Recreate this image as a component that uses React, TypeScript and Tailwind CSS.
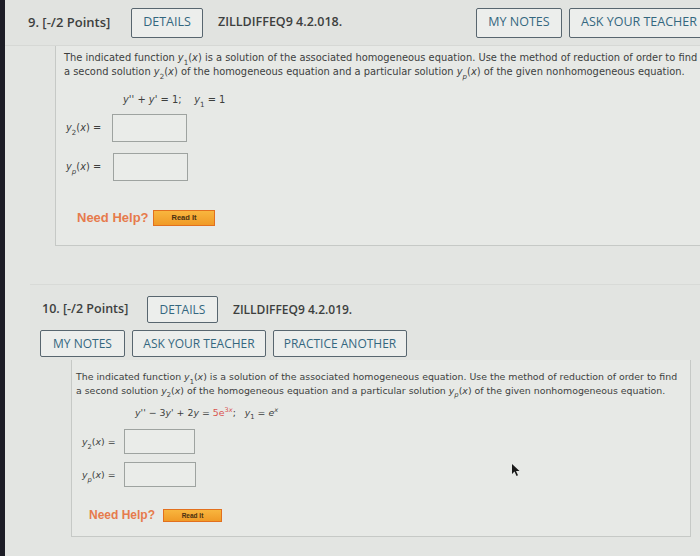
import React from "react";

const btn =
  "h-full border-[1.5px] border-[#58666f] rounded-[2px] bg-[#eceeec] text-[#34677f] font-['Open_Sans',sans-serif] flex items-center justify-center shrink-0 whitespace-nowrap";

function Y({ sub }: { sub: string }) {
  return (
    <span>
      <i>y</i>
      <sub className="text-[0.72em] leading-none align-[-0.3em]">{sub === "p" ? <i>p</i> : sub}</sub>
    </span>
  );
}

function Fn({ sub }: { sub: string }) {
  return (
    <span>
      <Y sub={sub} />(<i>x</i>)
    </span>
  );
}

function ReadIt({ w, h, text }: { w: string; h: string; text: string }) {
  return (
    <div
      className={`${w} ${h} border-[1.5px] border-[#e2701e] bg-gradient-to-b from-[#f8b63e] to-[#f09a26] flex items-center justify-center text-[#4a3010] font-bold font-['Liberation_Sans',sans-serif] ${text}`}
    >
      Read It
    </div>
  );
}

export default function App() {
  return (
    <div className="relative w-[700px] h-[556px] overflow-hidden bg-[#e3e5e2] flex text-[#3d3f3e]">
      <div className="w-[5px] shrink-0 bg-[#1d1d26]" />
      <div className="flex-1 flex flex-col min-w-0">
        {/* Question 9 header */}
        <div className="h-[46px] shrink-0 flex items-center pl-[23px] border-b border-[#d6d8d5] bg-[#e1e3e0] font-['Open_Sans',sans-serif]">
          <span className="w-[103px] shrink-0 text-[13px] font-semibold">9. [-/2 Points]</span>
          <div className="h-[30px] w-[72px] shrink-0">
            <div className={`${btn} text-[12.5px]`}>DETAILS</div>
          </div>
          <span className="ml-[15px] w-[258px] shrink-0 text-[12.5px] font-semibold">ZILLDIFFEQ9 4.2.018.</span>
          <div className="h-[30px] w-[86px] shrink-0">
            <div className={`${btn} text-[12.5px]`}>MY NOTES</div>
          </div>
          <div className="h-[30px] w-[140px] shrink-0 ml-[7px]">
            <div className={`${btn} text-[12.5px]`}>ASK YOUR TEACHER</div>
          </div>
        </div>

        {/* Question 9 body */}
        <div className="ml-[50px] h-[200px] shrink-0 border-l border-b border-[#c6c9c6] bg-[#e7e9e6] pl-[8px] pt-[5px] font-['DejaVu_Sans',sans-serif] text-[9.9px] leading-[14px] whitespace-nowrap">
          <div>
            The indicated function <Fn sub="1" /> is a solution of the associated homogeneous equation. Use the method of reduction of order to find
          </div>
          <div>
            a second solution <Fn sub="2" /> of the homogeneous equation and a particular solution <Fn sub="p" /> of the given nonhomogeneous equation.
          </div>
          <div className="ml-[59px] mt-[14px]">
            <i>y</i>'' + <i>y</i>' = 1;&nbsp;&nbsp;&nbsp; <Y sub="1" /> = 1
          </div>
          <div className="mt-[7px] flex flex-col gap-[11px]">
            <div className="flex items-center h-[28px]">
              <span className="ml-[2px] w-[46px] text-[9.8px]">
                <Fn sub="2" /> =
              </span>
              <div className="w-[75px] h-[28px] border border-[#9ea3a0] bg-[#eaece9]" />
            </div>
            <div className="flex items-center h-[28px]">
              <span className="ml-[2px] w-[47px] text-[9.8px]">
                <Fn sub="p" /> =
              </span>
              <div className="w-[75px] h-[28px] border border-[#9ea3a0] bg-[#eaece9]" />
            </div>
          </div>
          <div className="mt-[29px] ml-[13px] flex items-center h-[16px]">
            <span className="w-[76px] text-[13px] font-bold text-[#e67b4c] font-['Liberation_Sans',sans-serif]">Need Help?</span>
            <ReadIt w="w-[62px]" h="h-[16px]" text="text-[7.5px]" />
          </div>
        </div>

        {/* Question 10 header */}
        <div className="mt-[38px] ml-[25px] h-[76px] shrink-0 border-t border-[#d8dad7] bg-[#e2e4e1] pl-[10px] pt-[11px] font-['Open_Sans',sans-serif]">
          <div className="flex items-center h-[27px]">
            <span className="ml-[2px] w-[105px] shrink-0 text-[12.5px] font-semibold">10. [-/2 Points]</span>
            <div className="h-[27px] w-[71px] shrink-0">
              <div className={`${btn} text-[12px]`}>DETAILS</div>
            </div>
            <span className="ml-[15px] text-[12px] font-semibold">ZILLDIFFEQ9 4.2.019.</span>
          </div>
          <div className="mt-[7px] flex items-center gap-[7px] h-[27px]">
            <div className="h-[27px] w-[85px] shrink-0">
              <div className={`${btn} text-[12px]`}>MY NOTES</div>
            </div>
            <div className="h-[27px] w-[134px] shrink-0">
              <div className={`${btn} text-[12px]`}>ASK YOUR TEACHER</div>
            </div>
            <div className="h-[27px] w-[134px] shrink-0">
              <div className={`${btn} text-[12px]`}>PRACTICE ANOTHER</div>
            </div>
          </div>
        </div>

        {/* Question 10 body */}
        <div className="ml-[66px] w-[620px] h-[177px] shrink-0 border-l border-r border-b border-[#c6c9c6] bg-[#e7e9e6] pl-[4px] pt-[10px] font-['DejaVu_Sans',sans-serif] text-[9.4px] leading-[13px] whitespace-nowrap">
          <div>
            The indicated function <Fn sub="1" /> is a solution of the associated homogeneous equation. Use the method of reduction of order to find
          </div>
          <div>
            a second solution <Fn sub="2" /> of the homogeneous equation and a particular solution <Fn sub="p" /> of the given nonhomogeneous equation.
          </div>
          <div className="ml-[59px] mt-[8px]">
            <i>y</i>'' − 3<i>y</i>' + 2<i>y</i> = <span className="text-[#d9534f]">5e<sup className="text-[0.7em] leading-none">3<i>x</i></sup></span>;&nbsp;&nbsp;&nbsp;
            <Y sub="1" /> = <i>e</i>
            <sup className="text-[0.7em] leading-none">
              <i>x</i>
            </sup>
          </div>
          <div className="mt-[10px] flex flex-col gap-[8px]">
            <div className="flex items-center h-[25px]">
              <span className="ml-[6px] w-[42px] text-[9.4px]">
                <Fn sub="2" /> =
              </span>
              <div className="w-[71px] h-[25px] border border-[#9ea3a0] bg-[#eaece9]" />
            </div>
            <div className="flex items-center h-[25px]">
              <span className="ml-[6px] w-[42px] text-[9.4px]">
                <Fn sub="p" /> =
              </span>
              <div className="w-[72px] h-[25px] border border-[#9ea3a0] bg-[#eaece9]" />
            </div>
          </div>
          <div className="mt-[21px] ml-[13px] flex items-center h-[14px]">
            <span className="w-[74px] text-[12px] font-bold text-[#e67b4c] font-['Liberation_Sans',sans-serif]">Need Help?</span>
            <ReadIt w="w-[59px]" h="h-[13px]" text="text-[6.5px]" />
          </div>
        </div>
      </div>

      {/* mouse cursor */}
      <svg className="absolute left-[511px] top-[463px]" width="10" height="14" viewBox="0 0 10 14">
        <path d="M1 1 L1 11 L3.5 8.5 L5.5 13 L7 12.3 L5 8 L8.5 8 Z" fill="#1a1a1a" />
      </svg>
    </div>
  );
}
